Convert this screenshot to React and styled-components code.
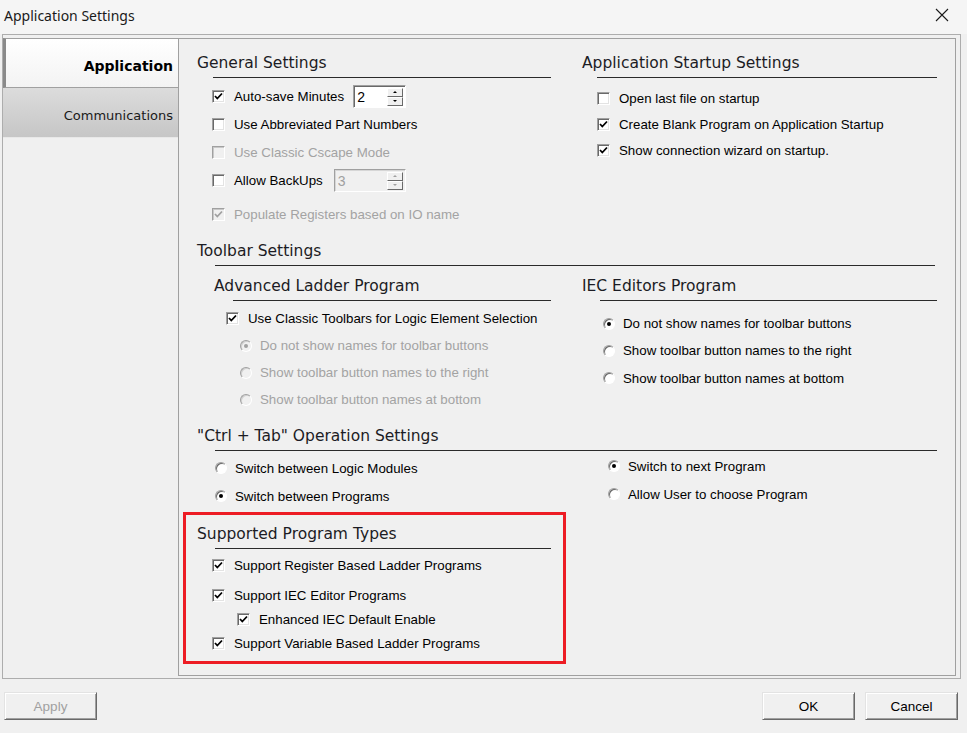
import React from "react";
import styled, { createGlobalStyle, css } from "styled-components";

const GlobalStyle = createGlobalStyle`
html, body {
  margin: 0;
  padding: 0;
  background: #f0f0f0;
}
`;

function Check({ checked, disabled }) {
    return (
        <Box disabled={disabled}>
            {checked && (
                <svg width="9" height="9" viewBox="0 0 9 9">
                    <polyline points="1,4 3.3,6.5 8,1.5" fill="none" stroke={disabled ? "#a0a0a0" : "#000"} strokeWidth="1.8" />
                </svg>
            )}
        </Box>
    );
}

function CheckItem({ label, checked, disabled, indent, h, mt }) {
    return (
        <Row indent={indent} h={h} mt={mt}>
            <Check checked={checked} disabled={disabled} />
            <Label disabled={disabled}>{label}</Label>
        </Row>
    );
}

function RadioItem({ label, checked, disabled, indent, h, mt }) {
    return (
        <Row indent={indent} h={h} mt={mt} gap={8}>
            <Radio disabled={disabled}>{checked && <Dot disabled={disabled} />}</Radio>
            <Label disabled={disabled}>{label}</Label>
        </Row>
    );
}

function Spin({ value, disabled, width }) {
    return (
        <SpinBox disabled={disabled} w={width}>
            <SpinValue disabled={disabled}>{value}</SpinValue>
            <SpinButtons>
                <SpinBtn><Arrow up disabled={disabled} /></SpinBtn>
                <SpinBtn><Arrow disabled={disabled} /></SpinBtn>
            </SpinButtons>
        </SpinBox>
    );
}

function App() {
    return (
        <Window>
            <GlobalStyle />
            <TitleBar>
                <Title>Application Settings</Title>
                <svg width="14" height="14" viewBox="0 0 14 14" style={{ marginRight: 18 }}>
                    <path d="M1 1 L13 13 M13 1 L1 13" stroke="#1a1a1a" strokeWidth="1.1" />
                </svg>
            </TitleBar>

            <Frame>
                <Nav>
                    <Tab active>Application</Tab>
                    <Tab>Communications</Tab>
                </Nav>

                <Panel>
                    <Columns cols="354px 1fr">
                        <div>
                            <Heading>General Settings</Heading>
                            <Rule indent={16} />
                            <Group mt={4}>
                                <Row indent={15} h={28}>
                                    <Check checked />
                                    <Label>Auto-save Minutes</Label>
                                    <Spin value="2" width={53} />
                                </Row>
                                <CheckItem indent={15} h={28} label="Use Abbreviated Part Numbers" />
                                <CheckItem indent={15} h={28} disabled label="Use Classic Cscape Mode" />
                                <Row indent={15} h={28}>
                                    <Check />
                                    <Label>Allow BackUps</Label>
                                    <Spin value="3" disabled width={72} />
                                </Row>
                                <CheckItem indent={15} h={28} mt={6} checked disabled label="Populate Registers based on IO name" />
                            </Group>
                        </div>
                        <div>
                            <Heading>Application Startup Settings</Heading>
                            <Rule indent={15} />
                            <Group mt={7}>
                                <CheckItem indent={15} h={26} label="Open last file on startup" />
                                <CheckItem indent={15} h={26} checked label="Create Blank Program on Application Startup" />
                                <CheckItem indent={15} h={26} checked label="Show connection wizard on startup." />
                            </Group>
                        </div>
                    </Columns>

                    <Block mt={13}>
                        <Heading>Toolbar Settings</Heading>
                        <Rule indent={18} right={2} />
                        <Columns cols="337px 1fr" ml={17} mt={10}>
                            <div>
                                <Heading>Advanced Ladder Program</Heading>
                                <Rule indent={19} />
                                <Group mt={4}>
                                    <CheckItem indent={12} h={27} checked label="Use Classic Toolbars for Logic Element Selection" />
                                    <RadioItem indent={26} h={27} checked disabled label="Do not show names for toolbar buttons" />
                                    <RadioItem indent={26} h={27} disabled label="Show toolbar button names to the right" />
                                    <RadioItem indent={26} h={27} disabled label="Show toolbar button names at bottom" />
                                </Group>
                            </div>
                            <div>
                                <Heading>IEC Editors Program</Heading>
                                <Rule indent={18} />
                                <Group mt={9}>
                                    <RadioItem indent={21} h={27} checked label="Do not show names for toolbar buttons" />
                                    <RadioItem indent={21} h={27} label="Show toolbar button names to the right" />
                                    <RadioItem indent={21} h={28} label="Show toolbar button names at bottom" />
                                </Group>
                            </div>
                        </Columns>
                    </Block>

                    <Block mt={13}>
                        <Heading>"Ctrl + Tab" Operation Settings</Heading>
                        <Rule indent={18} />
                        <Columns cols="354px 1fr">
                            <Group mt={3}>
                                <RadioItem indent={18} h={28} label="Switch between Logic Modules" />
                                <RadioItem indent={18} h={28} checked label="Switch between Programs" />
                            </Group>
                            <Group mt={1}>
                                <RadioItem indent={26} h={28} checked label="Switch to next Program" />
                                <RadioItem indent={26} h={28} label="Allow User to choose Program" />
                            </Group>
                        </Columns>
                    </Block>

                    <Highlight>
                        <Heading>Supported Program Types</Heading>
                        <Rule indent={18} />
                        <Group mt={4}>
                            <CheckItem indent={15} h={24} checked label="Support Register Based Ladder Programs" />
                            <CheckItem indent={15} h={24} mt={6} checked label="Support IEC Editor Programs" />
                            <CheckItem indent={40} h={24} checked label="Enhanced IEC Default Enable" />
                            <CheckItem indent={15} h={24} checked label="Support Variable Based Ladder Programs" />
                        </Group>
                    </Highlight>
                </Panel>
            </Frame>

            <Footer>
                <Button disabled>Apply</Button>
                <Spacer />
                <Button>OK</Button>
                <Button>Cancel</Button>
            </Footer>
        </Window>
    );
}

const Window = styled.div`
width: 967px;
height: 733px;
background: #f0f0f0;
overflow: hidden;
font-family: "Liberation Sans", Arial, sans-serif;
`;

const TitleBar = styled.div`
height: 34px;
box-sizing: border-box;
padding-bottom: 4px;
display: flex;
align-items: center;
justify-content: space-between;
background: #f5f5f5;
`;

const Title = styled.div`
font-family: "Noto Sans", "Open Sans", sans-serif;
font-size: 14px;
color: #1a1a1a;
padding-left: 4px;
`;

const Frame = styled.div`
margin-left: 2px;
width: 959px;
height: 645px;
box-sizing: border-box;
border: 1px solid #adadad;
padding: 3px 4px 2px 0;
display: flex;
`;

const Nav = styled.div`
width: 175px;
flex: none;
display: flex;
flex-direction: column;
`;

const Tab = styled.div`
height: 50px;
box-sizing: border-box;
display: flex;
align-items: center;
justify-content: flex-end;
padding: 6px 5px 0 0;
font-family: "DejaVu Sans", Tahoma, sans-serif;
font-size: 13px;
color: #1a1a1a;
background: linear-gradient(#dcdcdc, #c6c6c6);
border-bottom: 1px solid #e8e8e8;
${p => p.active && css`
  font-weight: bold;
  font-size: 14px;
  color: #000;
  background: linear-gradient(#ffffff, #f3f3f3);
  border-top: 1px solid #a0a0a0;
  border-bottom: 1px solid #a0a0a0;
  border-left: 3px solid #8a8a8a;
  padding-top: 5px;
`}
`;

const Panel = styled.div`
flex: 1;
box-sizing: border-box;
border: 1px solid #a0a0a0;
padding: 14px 18px 0 18px;
background: #f0f0f0;
`;

const Columns = styled.div`
display: grid;
grid-template-columns: ${p => p.cols};
column-gap: 31px;
margin-left: ${p => p.ml || 0}px;
margin-top: ${p => p.mt || 0}px;
`;

const Block = styled.div`
margin-top: ${p => p.mt || 0}px;
`;

const Heading = styled.div`
font-family: "DejaVu Sans", Tahoma, sans-serif;
font-size: 15.5px;
line-height: 20px;
height: 20px;
color: #1c1c24;
white-space: nowrap;
`;

const Rule = styled.div`
height: 1px;
background: #2a2a2a;
margin: 4px ${p => p.right || 0}px 0 ${p => p.indent || 0}px;
`;

const Group = styled.div`
display: flex;
flex-direction: column;
margin-top: ${p => p.mt || 0}px;
`;

const Row = styled.div`
display: flex;
align-items: center;
gap: ${p => p.gap || 9}px;
height: ${p => p.h || 28}px;
margin-top: ${p => p.mt || 0}px;
padding-left: ${p => p.indent || 0}px;
`;

const Label = styled.span`
font-size: 13.3px;
white-space: nowrap;
color: ${p => (p.disabled ? "#a3a3a3" : "#000")};
`;

const Box = styled.span`
width: 13px;
height: 13px;
box-sizing: border-box;
flex: none;
display: flex;
align-items: center;
justify-content: center;
background: ${p => (p.disabled ? "#f0f0f0" : "#fff")};
border: 1px solid;
border-color: #a0a0a0 #fff #fff #a0a0a0;
box-shadow: ${p => (p.disabled ? "inset 1px 1px 0 #c8c8c8" : "inset 1px 1px 0 #696969, inset -1px -1px 0 #e3e3e3")};
`;

const Radio = styled.span`
width: 12px;
height: 12px;
box-sizing: border-box;
flex: none;
border-radius: 50%;
display: flex;
align-items: center;
justify-content: center;
background: ${p => (p.disabled ? "#f0f0f0" : "#fff")};
border: 1px solid;
border-color: #a0a0a0 #fff #fff #a0a0a0;
box-shadow: ${p => (p.disabled ? "inset 1px 1px 0 #d0d0d0" : "inset 1px 1px 0 #696969")};
`;

const Dot = styled.span`
width: 4px;
height: 4px;
border-radius: 50%;
background: ${p => (p.disabled ? "#a0a0a0" : "#000")};
`;

const SpinBox = styled.span`
width: ${p => p.w}px;
height: 23px;
box-sizing: border-box;
margin-left: ${p => (p.disabled ? 2 : 0)}px;
display: flex;
align-items: stretch;
background: ${p => (p.disabled ? "#f0f0f0" : "#fff")};
border: 1px solid;
border-color: #a0a0a0 #fff #fff #a0a0a0;
box-shadow: inset 1px 1px 0 ${p => (p.disabled ? "#d6d6d6" : "#696969")};
padding: 2px 2px 1px 3px;
`;

const SpinValue = styled.span`
flex: 1;
font-size: 14px;
line-height: 18px;
color: ${p => (p.disabled ? "#a0a0a0" : "#000")};
`;

const SpinButtons = styled.span`
width: 16px;
display: flex;
flex-direction: column;
`;

const SpinBtn = styled.span`
flex: 1;
display: flex;
align-items: center;
justify-content: center;
background: #f0f0f0;
border: 1px solid;
border-color: #fff #696969 #696969 #fff;
`;

const Arrow = styled.span`
width: 0;
height: 0;
border-left: 2px solid transparent;
border-right: 2px solid transparent;
${p => (p.up
    ? css`border-bottom: 2px solid ${p.disabled ? "#a0a0a0" : "#000"};`
    : css`border-top: 2px solid ${p.disabled ? "#a0a0a0" : "#000"};`)}
`;

const Highlight = styled.div`
margin: 2px 0 0 -14px;
width: 383px;
box-sizing: border-box;
border: 3px solid #ed1c24;
padding: 9px 12px 6px 11px;
`;

const Footer = styled.div`
display: flex;
align-items: center;
gap: 10px;
padding: 13px 9px 0 4px;
`;

const Spacer = styled.div`
flex: 1;
`;

const Button = styled.button`
width: 93px;
height: 28px;
box-sizing: border-box;
background: #f0f0f0;
font-family: "Liberation Sans", Arial, sans-serif;
font-size: 13.5px;
color: ${p => (p.disabled ? "#a0a0a0" : "#000")};
border: 1px solid;
border-color: #e3e3e3 #696969 #696969 #e3e3e3;
box-shadow: inset 1px 1px 0 #fff, inset -1px -1px 0 #a0a0a0;
padding: 0;
`;

export default App;
